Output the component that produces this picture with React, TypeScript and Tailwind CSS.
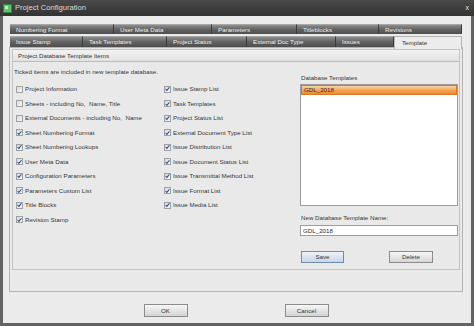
import React from "react";

function Cb({ checked }: { checked: boolean }) {
  return (
    <span className="w-[7px] h-[7px] border border-[#a0a0a0] bg-gradient-to-br from-[#d8d8d8] to-[#f8f8f8] flex items-center justify-center shrink-0">
      {checked && (
        <svg width="6" height="6" viewBox="0 0 6 6">
          <path d="M0.7 3 L2.3 4.7 L5.3 0.9" stroke="#2c4f9e" strokeWidth="1.3" fill="none" />
        </svg>
      )}
    </span>
  );
}

function Row({ label, checked }: { label: string; checked: boolean }) {
  return (
    <div className="h-[14.5px] flex items-center gap-[2px] whitespace-pre">
      <Cb checked={checked} />
      <span>{label}</span>
    </div>
  );
}

function Tab({ label, w, h, selected }: { label: string; w: string; h: string; selected?: boolean }) {
  if (selected) {
    return (
      <div
        className={`${w} h-[13px] -mb-[2px] relative z-10 flex items-start pt-[2px] pl-[7px] bg-[#ececec] border-t border-l border-r border-[#b4b4b4] text-[#333]`}
      >
        {label}
      </div>
    );
  }
  return (
    <div
      className={`${w} ${h} flex items-center pl-[6px] bg-gradient-to-b from-[#8e8e8e] via-[#626262] to-[#4e4e4e] border-r border-[#3c3c3c] border-t border-t-[#a8a8a8] text-[#ededed]`}
    >
      {label}
    </div>
  );
}

function Btn({ label, w, primary }: { label: string; w: string; primary?: boolean }) {
  return (
    <div
      className={`${w} h-[12px] flex items-center justify-center border ${
        primary
          ? "border-[#6f8db4] bg-gradient-to-b from-[#eef3f8] to-[#c9d6e4]"
          : "border-[#8c8c8c] bg-gradient-to-b from-[#f6f6f6] to-[#d6d6d6]"
      } text-[#333]`}
    >
      {label}
    </div>
  );
}

export default function App() {
  const left: [string, boolean][] = [
    ["Project Information", false],
    ["Sheets - including No,  Name, Title", false],
    ["External Documents - including No,  Name", false],
    ["Sheet Numbering Format", true],
    ["Sheet Numbering Lookups", true],
    ["User Meta Data", true],
    ["Configuration Parameters", true],
    ["Parameters Custom List", true],
    ["Title Blocks", true],
    ["Revision Stamp", true],
  ];
  const right: [string, boolean][] = [
    ["Issue Stamp List", true],
    ["Task Templates", true],
    ["Project Status List", true],
    ["External Document Type List", true],
    ["Issue Distribution List", true],
    ["Issue Document Status List", true],
    ["Issue Transmittal Method List", true],
    ["Issue Format List", true],
    ["Issue Media List", true],
  ];
  return (
    <div className="w-[474px] h-[326px] bg-[#636363] flex flex-col font-['Liberation_Sans',Arial,sans-serif] text-[6.2px] leading-[8px] text-[#363636] overflow-hidden">
      {/* title bar */}
      <div className="h-[16px] shrink-0 flex items-center bg-gradient-to-b from-[#4a4a4a] to-[#323232] pl-[3px] pr-[5px]">
        <svg width="9" height="9" viewBox="0 0 9 9" className="shrink-0">
          <rect x="0" y="0" width="9" height="9" fill="#2e8a3a" />
          <rect x="1" y="1" width="7" height="7" fill="#5cc46a" />
          <rect x="2" y="2" width="3" height="3" fill="#b8f0c0" />
        </svg>
        <span className="ml-[3px] text-[7.6px] text-[#dcdcdc]">Project Configuration</span>
        <span className="ml-auto text-[7px] text-[#e0e0e0]">x</span>
      </div>
      {/* body */}
      <div className="flex-1 mx-[3px] mb-[3px] bg-[#ebebeb] flex flex-col pt-[8px] pl-[6px] pr-[8px] pb-[6px]">
        <div className="pl-[1px] flex flex-col">
          <div className="flex h-[10px]">
            <Tab label="Numbering Format" w="w-[104px]" h="h-[10px]" />
            <Tab label="User Meta Data" w="w-[98px]" h="h-[10px]" />
            <Tab label="Parameters" w="w-[85px]" h="h-[10px]" />
            <Tab label="Titleblocks" w="w-[82px]" h="h-[10px]" />
            <Tab label="Revisions" w="w-[83px]" h="h-[10px]" />
          </div>
          <div className="flex h-[11px] mt-[2px] items-start">
            <Tab label="Issue Stamp" w="w-[73px]" h="h-[11px]" />
            <Tab label="Task Templates" w="w-[84px]" h="h-[11px]" />
            <Tab label="Project Status" w="w-[80px]" h="h-[11px]" />
            <Tab label="External Doc Type" w="w-[89px]" h="h-[11px]" />
            <Tab label="Issues" w="w-[58px]" h="h-[11px]" />
            <Tab label="Template" w="w-[68px]" h="h-[11px]" selected />
          </div>
        </div>
        {/* panel */}
        <div className="h-[245px] border border-[#b4b4b4] bg-[#e9e9e9] flex flex-col px-[2px] pt-[1px]">
          <div className="h-[221px] border border-[#c4c4c4] flex flex-col">
            <div className="h-[12px] shrink-0 flex items-center pl-[5px] border-b border-[#bdbdbd] bg-gradient-to-b from-[#f2f2f2] to-[#e2e2e2]">
              Project Database Template Items
            </div>
            <div className="flex flex-1">
              <div className="w-[287px] pt-[6px]">
                <div className="pl-[1px] h-[8px]">Ticked items are included in new template database.</div>
                <div className="flex mt-[6px] pl-[3px]">
                  <div className="w-[148px] flex flex-col">
                    {left.map(([l, c]) => (
                      <Row key={l} label={l} checked={c} />
                    ))}
                  </div>
                  <div className="flex flex-col">
                    {right.map(([l, c]) => (
                      <Row key={l} label={l} checked={c} />
                    ))}
                  </div>
                </div>
              </div>
              <div className="w-[158px] pt-[12px] flex flex-col">
                <div className="h-[8px] pl-[1px]">Database Templates</div>
                <div className="mt-[2px] h-[122px] border border-[#9c9c9c] bg-white p-[0px]">
                  <div className="h-[10px] flex items-center pl-[2px] bg-gradient-to-b from-[#fbd3a6] via-[#f5a458] to-[#ee8a34] border border-[#d9782a] text-[#2a2a2a]">
                    GDL_2018
                  </div>
                </div>
                <div className="mt-[8px] h-[8px] pl-[1px]">New Database Template Name:</div>
                <div className="mt-[3px] h-[11px] border border-[#9c9c9c] bg-white flex items-center pl-[2px] text-[#2a2a2a]">
                  GDL_2018
                </div>
                <div className="mt-[15px] flex pl-[1px]">
                  <Btn label="Save" w="w-[43px]" primary />
                  <div className="ml-[45px]">
                    <Btn label="Delete" w="w-[44px]" />
                  </div>
                </div>
              </div>
            </div>
          </div>
        </div>
        <div className="mt-[12px] flex justify-center gap-[97px]">
          <div className="w-[44px] h-[13px] flex items-center justify-center border border-[#8c8c8c] bg-gradient-to-b from-[#f6f6f6] to-[#d4d4d4]">OK</div>
          <div className="w-[44px] h-[13px] flex items-center justify-center border border-[#8c8c8c] bg-gradient-to-b from-[#f6f6f6] to-[#d4d4d4]">Cancel</div>
        </div>
      </div>
    </div>
  );
}
